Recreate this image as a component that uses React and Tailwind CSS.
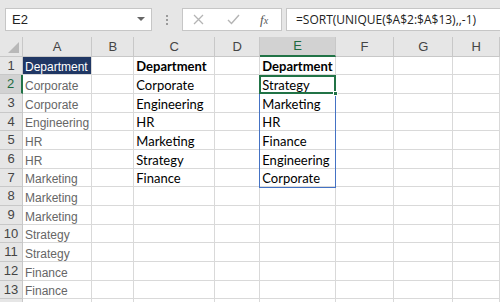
import React from "react";

const colA = ["Department","Corporate","Corporate","Engineering","HR","HR","Marketing","Marketing","Marketing","Strategy","Strategy","Finance","Finance",""];
const colC = ["Department","Corporate","Engineering","HR","Marketing","Strategy","Finance","","","","","","",""];
const colE = ["Department","Strategy","Marketing","HR","Finance","Engineering","Corporate","","","","","","",""];
const letters = ["A","B","C","D","E","F","G","H"];

function Cell({ children, className = "" }) {
  return (
    <div className={"flex items-end overflow-hidden whitespace-nowrap border-r border-b border-[#d9d9d9] pl-[2px] pb-[1px] leading-none " + className}>
      {children}
    </div>
  );
}

export default function App() {
  return (
    <div className="w-[500px] h-[302px] overflow-hidden bg-white" style={{ fontFamily: "'Liberation Sans', Arial, sans-serif" }}>
      {/* Formula bar */}
      <div className="h-[37px] bg-[#e6e6e6] flex items-start pt-[8px] pl-[5px] gap-0">
        <div className="w-[147px] h-[23px] bg-white border border-[#c6c6c6] flex items-center justify-between pl-[6px] pr-[6px]">
          <span className="text-[13px] text-[#222]">E2</span>
          <svg width="8" height="5" viewBox="0 0 8 5"><path d="M0 0 L8 0 L4 4 Z" fill="#666" /></svg>
        </div>
        <div className="w-[30px] h-[23px] flex flex-col items-center justify-center gap-[2px]">
          <div className="w-[2px] h-[2px] bg-[#9a9a9a]" />
          <div className="w-[2px] h-[2px] bg-[#9a9a9a]" />
          <div className="w-[2px] h-[2px] bg-[#9a9a9a]" />
        </div>
        <div className="w-[100px] h-[23px] bg-white border border-[#c6c6c6] flex items-center">
          <svg className="ml-[10px]" width="11" height="11" viewBox="0 0 11 11"><path d="M1 1 L10 10 M10 1 L1 10" stroke="#b4b4b4" strokeWidth="1.3" /></svg>
          <svg className="ml-[23px]" width="13" height="11" viewBox="0 0 13 11"><path d="M1 6 L4.5 9.5 L12 1" stroke="#b4b4b4" strokeWidth="1.4" fill="none" /></svg>
          <span className="ml-[20px] text-[13px] italic text-[#555]" style={{ fontFamily: "'Liberation Serif', serif" }}>f<span className="text-[10px]">x</span></span>
        </div>
        <div className="ml-[4px] flex-1 h-[23px] bg-white border border-[#c6c6c6] border-r-0 flex items-center pl-[9px]">
          <span className="text-[12px] text-[#222]" style={{ fontFamily: "'Open Sans', sans-serif" }}>=SORT(UNIQUE($A$2:$A$13),,-1)</span>
        </div>
      </div>

      {/* Grid */}
      <div className="relative">
        <div className="grid grid-cols-[23px_69.3px_42px_81px_45px_75.4px_58.6px_59px_1fr] grid-rows-[19.7px_repeat(14,18.67px)]">
          {/* header row */}
          <div className="relative bg-[#e6e6e6] border-r border-b border-[#c8c8c8]">
            <svg className="absolute right-[3px] bottom-[3px]" width="11" height="11" viewBox="0 0 11 11"><path d="M11 0 L11 11 L0 11 Z" fill="#b8b8b8" /></svg>
          </div>
          {letters.map((l) => (
            <div
              key={l}
              className={
                "flex items-center justify-center text-[13px] border-r border-[#c8c8c8] " +
                (l === "E"
                  ? "bg-[#d2d2d2] text-[#1e6b3f] border-b-2 border-b-[#217346]"
                  : "bg-[#e6e6e6] text-[#444] border-b border-b-[#c8c8c8]")
              }
            >
              {l}
            </div>
          ))}

          {colA.map((a, i) => (
            <React.Fragment key={i}>
              <div
                className={
                  "flex items-center justify-center text-[13px] " +
                  (i === 1
                    ? "bg-[#d2d2d2] text-[#1e6b3f] border-r-2 border-r-[#217346] border-b border-b-[#c8c8c8]"
                    : "bg-[#e6e6e6] text-[#444] border-r border-b border-[#c8c8c8]")
                }
              >
                {i + 1}
              </div>
              <Cell className={i === 0 ? "bg-[#203764] text-white text-[12px]" : "text-[#666] text-[12px]"}>{a}</Cell>
              <Cell />
              <Cell className={"text-[13px] text-black " + (i === 0 ? "font-bold" : "")}>
                <span style={{ fontFamily: "Lato, sans-serif" }}>{colC[i]}</span>
              </Cell>
              <Cell />
              <Cell className={"text-[13px] text-black " + (i === 0 ? "font-bold" : "")}>
                <span style={{ fontFamily: "Lato, sans-serif" }}>{colE[i]}</span>
              </Cell>
              <Cell />
              <Cell />
              <Cell />
            </React.Fragment>
          ))}
        </div>

        {/* spill range border */}
        <div className="absolute left-[259.3px] top-[38.4px] w-[76.4px] h-[112.3px] border border-[#4472c4] pointer-events-none" />
        {/* active cell */}
        <div className="absolute left-[259.3px] top-[37.7px] w-[76.4px] h-[19.7px] border-2 border-[#217346] pointer-events-none" />
        <div className="absolute left-[332.7px] top-[54.4px] w-[5px] h-[5px] bg-[#217346] border border-white pointer-events-none" />
      </div>
    </div>
  );
}
